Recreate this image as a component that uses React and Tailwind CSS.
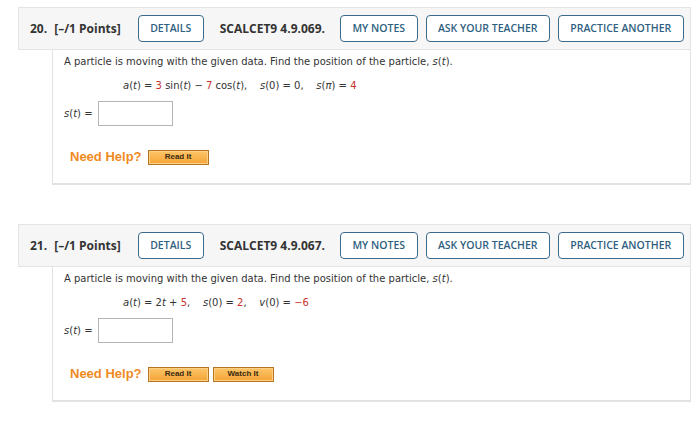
import React from 'react';

const headerFont = { fontFamily: '"Open Sans", "Liberation Sans", sans-serif' };

function OutlineButton({ w, children }) {
    return (
        <button className={`shrink-0 whitespace-nowrap h-[27px] ${w} rounded-[4px] border-[1.5px] border-[#3b6b8c] bg-white text-[10.5px] font-semibold text-[#2f5f80]`}>
            {children}
        </button>
    );
}

function HelpButton({ children }) {
    return (
        <button className="w-[61px] h-[15px] border border-[#b8741f] bg-gradient-to-b from-[#fcc569] to-[#f5a431] shadow-[inset_0_0_0_1px_#fbd08a] text-[8px] font-bold leading-none text-[#3a2a10] font-['Liberation_Sans',Arial,sans-serif]">
            {children}
        </button>
    );
}

const Red = ({ children }) => <span className="text-[#c8322c]">{children}</span>;
const V = ({ children }) => <i>{children}</i>;

function Question({ num, code, equation, helpers }) {
    return (
        <div className="ml-[18px] w-[673px]">
            <div className="h-[43px] flex items-center whitespace-nowrap border border-[#e4e4e4] bg-[#f6f6f6] pl-[11px] text-[12px] font-bold text-[#333]" style={headerFont}>
                <span className="shrink-0">{num}.</span>
                <span className="shrink-0 ml-[7px]">[–/1 Points]</span>
                <span className="shrink-0 ml-[17px] flex"><OutlineButton w="w-[66px]">DETAILS</OutlineButton></span>
                <span className="shrink-0 ml-[16px] w-[104px]">{code}</span>
                <span className="shrink-0 ml-[16px] flex gap-[8px]">
                    <OutlineButton w="w-[78px]">MY NOTES</OutlineButton>
                    <OutlineButton w="w-[124px]">ASK YOUR TEACHER</OutlineButton>
                    <OutlineButton w="w-[126px]">PRACTICE ANOTHER</OutlineButton>
                </span>
            </div>
            <div className="ml-[34px] h-[135px] border-x border-b-2 border-[#e2e2e2] bg-white pl-[11px] text-[10px] leading-[16px] text-[#333] font-['DejaVu_Sans',Verdana,sans-serif]">
                <p className="pt-[4px]">A particle is moving with the given data. Find the position of the particle, <V>s</V>(<V>t</V>).</p>
                <p className="mt-[8px] pl-[59px] whitespace-pre">{equation}</p>
                <div className="mt-[7px] flex items-center gap-[5px]">
                    <span>
                        <V>s</V>(<V>t</V>) =
                    </span>
                    <div className="w-[75px] h-[25px] border border-[#b5b5b5] bg-white" />
                </div>
                <div className="mt-[21px] ml-[6px] h-[20px] flex items-center">
                    <span className="text-[13px] font-bold text-[#ef8a22] font-['Liberation_Sans',Arial,sans-serif] mr-[6px]">Need Help?</span>
                    <div className="flex gap-[4px]">
                        {helpers.map(h => (
                            <HelpButton key={h}>{h}</HelpButton>
                        ))}
                    </div>
                </div>
            </div>
        </div>
    );
}

export default function App() {
    return (
        <div className="w-[700px] h-[446px] bg-white pt-[7px] overflow-hidden">
            <Question
                num="20"
                code="SCALCET9 4.9.069."
                equation={
                    <>
                        <V>a</V>(<V>t</V>) = <Red>3</Red> sin(<V>t</V>) − <Red>7</Red> cos(<V>t</V>),    <V>s</V>(0) = 0,    <V>s</V>(<V>π</V>) = <Red>4</Red>
                    </>
                }
                helpers={['Read It']}
            />
            <div className="h-[39px]" />
            <Question
                num="21"
                code="SCALCET9 4.9.067."
                equation={
                    <>
                        <V>a</V>(<V>t</V>) = 2<V>t</V> + <Red>5</Red>,    <V>s</V>(0) = <Red>2</Red>,    <V>v</V>(0) = <Red>−6</Red>
                    </>
                }
                helpers={['Read It', 'Watch It']}
            />
        </div>
    );
}
